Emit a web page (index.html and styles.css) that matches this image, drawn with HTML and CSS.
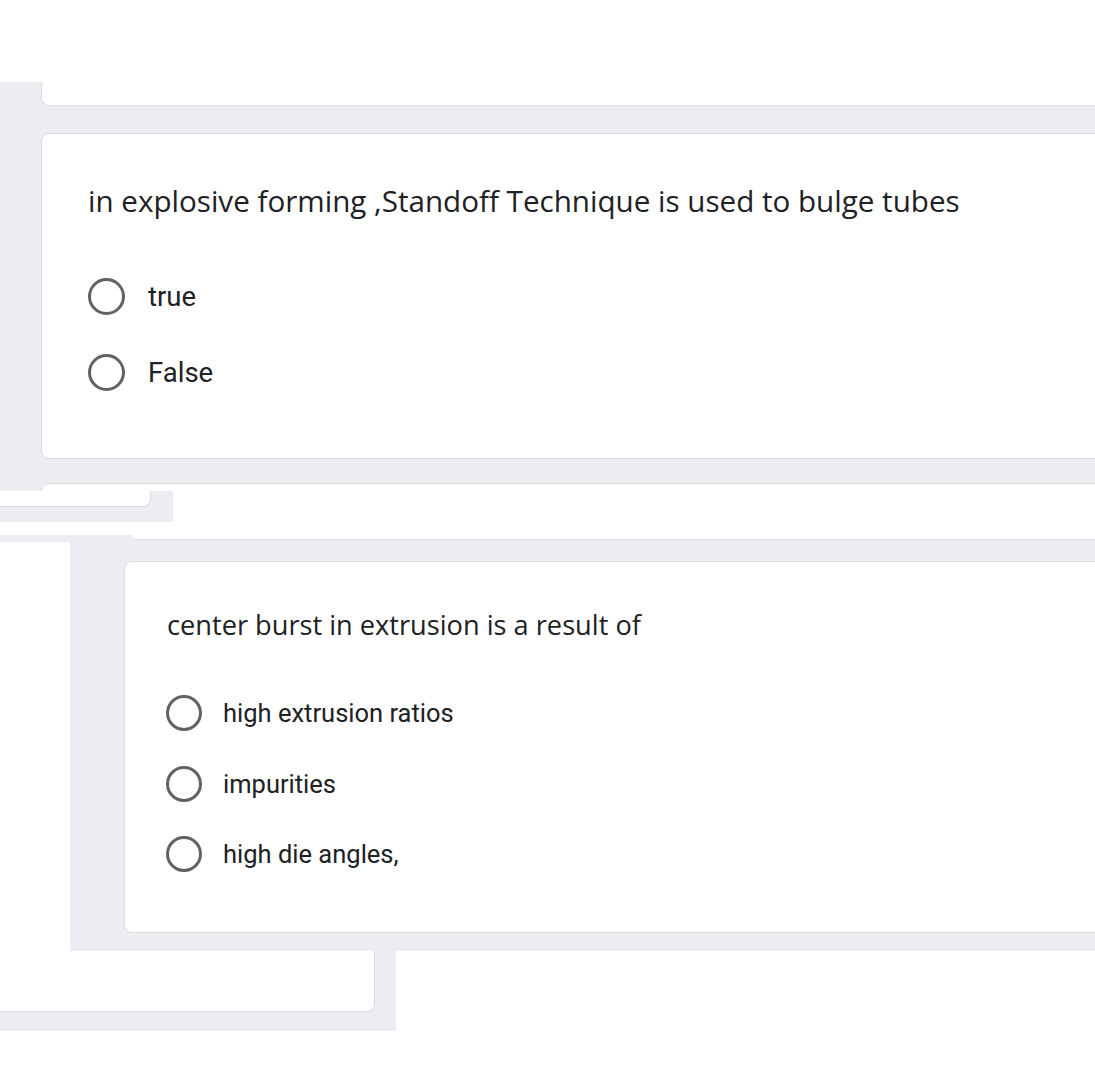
FILE: index.html
```html
<!DOCTYPE html>
<html>
<head>
<meta charset="utf-8">
<link rel="stylesheet" href="styles.css">
</head>
<body>
<div class="page">
  <div class="top-space"></div>

  <div class="piece piece1">
    <div class="card card-a"></div>
    <div class="card card-b">
      <div class="title title-b">in explosive forming ,Standoff Technique is used to bulge tubes</div>
      <div class="option opt-b"><span class="radio"></span><span class="label">true</span></div>
      <div class="option opt-b"><span class="radio"></span><span class="label">False</span></div>
    </div>
    <div class="card card-c"></div>
  </div>

  <div class="piece piece2">
    <div class="card card-p2"></div>
  </div>

  <div class="gap-13"></div>

  <div class="piece4">
    <div class="p4-left"></div>
    <div class="p4-main">
      <div class="card stub"></div>
      <div class="card card-d">
        <div class="title title-d">center burst in extrusion is a result of</div>
        <div class="option opt-d"><span class="radio"></span><span class="label">high extrusion ratios</span></div>
        <div class="option opt-d"><span class="radio"></span><span class="label">impurities</span></div>
        <div class="option opt-d"><span class="radio"></span><span class="label">high die angles,</span></div>
      </div>
    </div>
  </div>

  <div class="piece piece5">
    <div class="card card-p5"></div>
  </div>
</div>
</body>
</html>
```
FILE: styles.css
```css
html, body {
  margin: 0;
  padding: 0;
  background: #ffffff;
}
.page {
  width: 1095px;
  height: 1080px;
  overflow: hidden;
  color: #202124;
}
.top-space { height: 82px; }
.gap-13 { height: 13px; }

.piece {
  background: #edecf2;
  overflow: hidden;
}
.card {
  background: #ffffff;
  border: 1px solid #dadce0;
  border-radius: 8px;
  box-sizing: border-box;
}

/* piece 1 */
.piece1 {
  height: 409px;
  padding-left: 41px;
}
.card-a {
  width: 1100px;
  height: 24px;
  border-top: none;
  border-radius: 0 0 0 8px;
}
.card-b {
  width: 1100px;
  height: 326px;
  margin-top: 27px;
  padding: 49px 0 0 46px;
}
.card-c {
  width: 1100px;
  height: 30px;
  margin-top: 24px;
}

.title {
  font-family: "Open Sans", "Lato", sans-serif;
  white-space: nowrap;
}
.title-b {
  font-size: 29.6px;
  line-height: 36px;
  margin-bottom: 39px;
}
.title-d {
  font-size: 27.2px;
  line-height: 32px;
  margin-bottom: 37px;
}
.option {
  display: flex;
  align-items: center;
  font-family: "Roboto", "Liberation Sans", sans-serif;
}
.radio {
  box-sizing: border-box;
  border: 3px solid #5f6368;
  border-radius: 50%;
  flex: none;
}
.opt-b { height: 76px; font-size: 27.5px; }
.opt-b .radio { width: 37px; height: 37px; margin-right: 23px; }
.opt-d { height: 70.5px; font-size: 25.5px; }
.opt-d .radio { width: 36px; height: 36px; margin-left: -1px; margin-right: 21px; }

/* piece 2 */
.piece2 {
  width: 173px;
  height: 31px;
}
.card-p2 {
  width: 151px;
  height: 16px;
  border-top: none;
  border-left: none;
  border-radius: 0 0 8px 0;
}

/* piece 4 */
.piece4 {
  display: flex;
  align-items: flex-start;
}
.p4-left {
  width: 70px;
  height: 7px;
  background: #edecf2;
  flex: none;
}
.p4-main {
  flex: 1;
  height: 416px;
  background: #edecf2;
  overflow: hidden;
}
.stub {
  margin-left: 60px;
  width: 1000px;
  height: 5px;
  border-top: none;
  border-right: none;
  border-radius: 0 0 0 8px;
}
.card-d {
  margin-left: 54px;
  margin-top: 21px;
  width: 1000px;
  height: 372px;
  padding: 47px 0 0 42px;
}

/* piece 5 */
.piece5 {
  width: 396px;
  height: 80px;
}
.card-p5 {
  width: 375px;
  height: 61px;
  border-top: none;
  border-left: none;
  border-radius: 0 0 8px 0;
}
```
